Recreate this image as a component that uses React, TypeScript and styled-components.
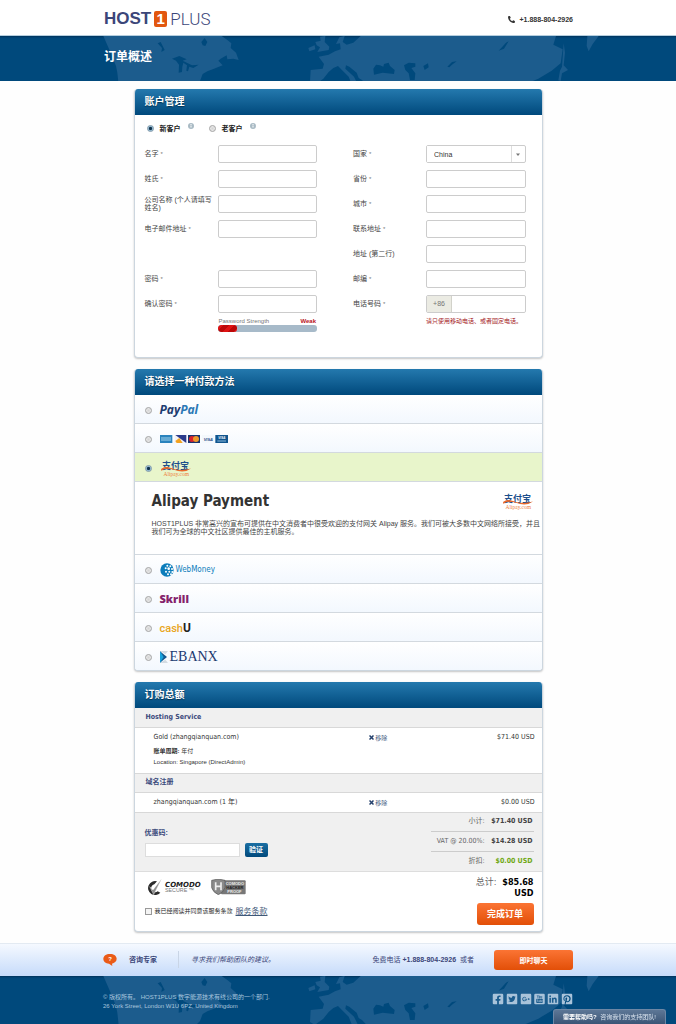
import React from "react";
import styled, { createGlobalStyle, css } from "styled-components";
import {
  FaFacebookSquare,
  FaTwitterSquare,
  FaGooglePlusSquare,
  FaLinkedin,
  FaPinterestSquare,
  FaPhoneAlt,
} from "react-icons/fa";

const sans = `"Liberation Sans", "Noto Sans CJK SC", sans-serif`;
const humanist = `"DejaVu Sans Condensed", "DejaVu Sans", "Noto Sans CJK SC", sans-serif`;

const Global = createGlobalStyle`
  * { box-sizing: border-box; }
  body { margin: 0; background: #fefefe; color: #444; font-family: ${sans}; font-size: 7px; line-height: 9px; }
  input, select, button { font-family: inherit; margin: 0; }
  h1, h2, h3, p { margin: 0; }
`;

/* ---------- page frame ---------- */

const Container = styled.div`
  position: relative;
  display: flex;
  align-items: center;
  width: 100%;
  max-width: 470px;
  margin: 0 auto;
`;

const Header = styled.header`
  display: flex;
  height: 36px;
  background: #fff;
  border-bottom: 1px solid #b5cede;
`;

const Logo = styled.a`
  display: flex;
  align-items: center;
  gap: 3px;
  margin-left: 1px;
  padding-top: 2px;
  color: #3b4679;
  font-size: 17px;
  line-height: 20px;
  text-decoration: none;
`;

const LogoOne = styled.span`
  width: 13px;
  height: 16px;
  border-radius: 2px;
  background: #e2570f;
  color: #fff;
  font-size: 15px;
  font-weight: 700;
  line-height: 16px;
  text-align: center;
`;

const LogoLight = styled.span`
  font-family: Roboto, sans-serif;
  font-weight: 300;
`;

const Phone = styled.span`
  display: flex;
  align-items: center;
  gap: 4px;
  margin-left: auto;
  margin-top: 4px;
  color: #333;
  font-weight: 700;
`;

const mapGround = css`
  position: relative;
  overflow: hidden;
  background: #00497c;
`;

const Banner = styled.div`
  ${mapGround}
  display: flex;
  height: 45px;
  box-shadow: inset 0 3px 2px -2px #00335c;
`;

const MapSvg = styled.svg`
  position: absolute;
  top: 0;
  left: 50%;
  margin-left: -248px;
`;

const PageTitle = styled.h1`
  margin-left: 1px;
  padding-bottom: 3px;
  color: #fff;
  font-size: 12px;
  line-height: 16px;
`;

const Main = styled.main`
  display: flex;
  flex-direction: column;
  gap: 11px;
  width: 100%;
  max-width: 409px;
  margin: 0 auto;
  padding: 8px 0 11px;
  position: relative;
`;

const Card = styled.section`
  border: 1px solid #ccd6df;
  border-top: 0;
  border-radius: 4px;
  background: #fff;
  box-shadow: 0 1px 2px #c4c4c4;
  overflow: hidden;
`;

const CardTitle = styled.h2`
  height: 26px;
  padding: 0 10px;
  background: linear-gradient(#2479ae, #00497c);
  color: #fff;
  font-size: 10px;
  line-height: 25px;
  text-shadow: 0 1px 1px #003050;
`;

/* ---------- form ---------- */

const Radio = styled.input.attrs({ type: "radio" })`
  appearance: none;
  flex: none;
  width: 7px;
  height: 7px;
  border: 1px solid #a3a3a3;
  border-radius: 50%;
  background: radial-gradient(#d4d4d4, #f2f2f2);
  &:checked {
    border-color: #8199a9;
    background: radial-gradient(#10324c 35%, #9cc4dd 60%);
  }
`;

const Customers = styled.div`
  display: flex;
  align-items: center;
  height: 26px;
  padding: 0 12px;
  gap: 15px;
`;

const CustomerLabel = styled.label`
  display: flex;
  align-items: center;
  gap: 6px;
  color: #222;
  font-weight: 700;
`;

const Info = styled.svg`
  margin: 0 0 5px 1px;
`;

const Fields = styled.div`
  display: grid;
  grid-template-columns: 1fr 1fr;
  column-gap: 36px;
  row-gap: 7px;
  padding: 4px 16px 25px 10px;
`;

const Field = styled.label`
  display: grid;
  grid-template-columns: 73px 1fr;
  align-items: center;
  height: 18px;
  line-height: 8px;
  sup { color: #777; font-size: 6px; line-height: 6px; vertical-align: 0; }
`;

const Box = styled.input`
  width: 100%;
  min-width: 0;
  height: 18px;
  padding: 0 4px;
  border: 1px solid #ccc;
  border-radius: 2px;
  background: #fff;
  font-size: 7px;
`;

const SelectWrap = styled.span`
  display: grid;
  grid-template-columns: 1fr 13px;
  border: 1px solid #ccc;
  border-radius: 2px;
`;

const Select = styled.select`
  appearance: none;
  min-width: 0;
  height: 16px;
  padding: 0 7px;
  border: 0;
  border-right: 1px solid #ddd;
  background: #fff;
  color: #333;
  font-size: 7px;
`;

const Caret = styled.svg`
  place-self: center;
`;

const PhoneGroup = styled.span`
  display: flex;
  border: 1px solid #ccc;
  border-radius: 2px;
  overflow: hidden;
  ${Box} { height: 16px; border: 0; }
`;

const Prefix = styled.span`
  flex: none;
  width: 25px;
  border-right: 1px solid #d2d2ca;
  background: #ebebe3;
  color: #777;
  line-height: 16px;
  text-align: center;
`;

const Below = styled.div`
  margin: -3px 0 0 73px;
  font-size: 6px;
  line-height: 8px;
  white-space: nowrap;
`;

const StrengthText = styled.div`
  display: flex;
  justify-content: space-between;
  padding: 0 1px;
  color: #777;
  b { color: #b9121b; }
`;

const Meter = styled.div`
  height: 7px;
  border-radius: 3px;
  background: #a7bac9;
  overflow: hidden;
`;

const MeterFill = styled.div`
  width: 20%;
  height: 7px;
  border-radius: 3px;
  background: repeating-linear-gradient(135deg, #df1313 0 4px, #bd0808 4px 8px);
`;

const Hint = styled.span`
  color: #a3161b;
`;

/* ---------- payment ---------- */

const Method = styled.label<{ $active?: boolean }>`
  display: flex;
  align-items: center;
  gap: 8px;
  height: 29px;
  padding: 2px 10px 0;
  border-bottom: 1px solid #d3d9df;
  background: ${(p) => (p.$active ? "#e8f5cb" : "linear-gradient(#ffffff, #f3f8fe)")};
  &:last-child { height: 28px; border-bottom: 0; }
`;

const Detail = styled.div`
  display: grid;
  height: 73px;
  grid-template-rows: 38px 1fr;
  padding: 0 0 0 17px;
  border-bottom: 1px solid #d3d9df;
`;

const DetailHead = styled.div`
  display: flex;
  align-items: center;
  justify-content: space-between;
  padding-right: 9px;
`;

const DetailTitle = styled.h3`
  color: #333;
  font-family: ${humanist};
  font-size: 15px;
  line-height: 20px;
`;

const DetailText = styled.p`
  line-height: 8px;
`;

const Word = styled.span<{ $size: number; $color: string; $family?: string; $weight?: number; $italic?: boolean }>`
  color: ${(p) => p.$color};
  font-family: ${(p) => p.$family ?? "inherit"};
  font-size: ${(p) => p.$size}px;
  font-style: ${(p) => (p.$italic ? "italic" : "normal")};
  font-weight: ${(p) => p.$weight ?? 400};
  line-height: 14px;
`;

const Brand = styled.span`
  display: flex;
  align-items: center;
  gap: 2px;
`;

/* ---------- order ---------- */

const Order = styled.table`
  width: 100%;
  border-collapse: collapse;
  table-layout: fixed;
  color: #333;
  font-family: ${humanist};
  font-size: 7px;
`;

const Col = styled.col<{ $w: number }>`
  width: ${(p) => p.$w}%;
`;

const GroupHead = styled.th`
  height: 19px;
  padding: 0 11px;
  border-bottom: 1px solid #d8d8d8;
  background: #f0f0f0;
  color: #3b4a7c;
  text-align: left;
`;

const Cell = styled.td<{ $right?: boolean; $tall?: boolean }>`
  height: ${(p) => (p.$tall ? 46 : 20)}px;
  padding: 5px 7px 4px ${(p) => (p.$right ? 0 : 19)}px;
  border-bottom: 1px solid #d8d8d8;
  text-align: ${(p) => (p.$right ? "right" : "left")};
  vertical-align: top;
  white-space: nowrap;
`;

const Extra = styled.div<{ $gap?: boolean }>`
  margin-top: ${(p) => (p.$gap ? 5 : 2)}px;
  font-family: ${sans};
  font-size: 6px;
`;

const Remove = styled.a`
  display: flex;
  align-items: center;
  gap: 1px;
  color: #4a6285;
  font-size: 6px;
  text-decoration: none;
`;

const Summary = styled.div`
  display: flex;
  justify-content: space-between;
  padding: 0 8px 0 10px;
  border-bottom: 1px solid #ddd;
  background: #f0f0f0;
`;

const Promo = styled.div`
  display: flex;
  flex-direction: column;
  gap: 6px;
  padding-top: 15px;
  color: #3b4a7c;
  font-weight: 700;
`;

const PromoRow = styled.div`
  display: flex;
  gap: 5px;
`;

const PromoInput = styled.input`
  width: 95px;
  height: 14px;
  border: 1px solid #ddd;
  background: #fff;
  font-size: 7px;
`;

const Verify = styled.button`
  width: 23px;
  height: 14px;
  padding: 0;
  border: 0;
  border-radius: 2px;
  background: linear-gradient(#1b6fa3, #00497c);
  color: #fff;
  font-size: 7px;
  font-weight: 700;
  line-height: 14px;
`;

const Totals = styled.table`
  width: 103px;
  border-collapse: collapse;
  color: #666;
  font-family: ${humanist};
  font-size: 7px;
  white-space: nowrap;
  th, td { height: 19px; padding: 0 1px 0 0; text-align: right; }
  th { font-weight: 400; }
  td { color: #444; font-weight: 700; }
  tr + tr th, tr + tr td { height: 20px; border-top: 1px solid #ccc; }
  tr:last-child th, tr:last-child td { height: 19px; }
  tr:last-child td { color: #6fa814; }
`;

const Finish = styled.div`
  display: flex;
  justify-content: space-between;
  height: 59px;
  padding: 5px 8px 0 10px;
`;

const FinishLeft = styled.div`
  display: flex;
  flex-direction: column;
  gap: 11px;
  padding-top: 1px;
`;

const FinishRight = styled.div`
  display: flex;
  flex-direction: column;
  align-items: flex-end;
  gap: 4px;
`;

const Seals = styled.div`
  display: flex;
  align-items: center;
  gap: 8px;
`;

const Terms = styled.div`
  display: flex;
  align-items: center;
  gap: 3px;
  color: #222;
  font-size: 6px;
  a { color: #3e5878; font-size: 8px; }
  label { display: flex; align-items: center; gap: 3px; }
`;

const Check = styled.input.attrs({ type: "checkbox" })`
  appearance: none;
  width: 7px;
  height: 7px;
  border: 1px solid #999;
  background: #f4f4f4;
`;

const Total = styled.div`
  display: flex;
  gap: 5px;
  color: #666;
  font-family: ${humanist};
  font-size: 9px;
  line-height: 11px;
  b { width: 32px; color: #000; text-align: right; }
`;

const Orange = styled.button<{ $w: number; $h: number; $size: number }>`
  width: ${(p) => p.$w}px;
  height: ${(p) => p.$h}px;
  padding: 0;
  border: 0;
  border-radius: 3px;
  background: linear-gradient(#fb7434, #e24f08);
  color: #fff;
  font-size: ${(p) => p.$size}px;
  font-weight: 700;
`;

/* ---------- footer ---------- */

const HelpBar = styled.aside`
  display: flex;
  height: 33px;
  border-top: 1px solid #e3eaf2;
  background: linear-gradient(#f5f9ff, #c6dbfa);
  color: #3b4679;
`;

const HelpTitle = styled.b`
  width: 49px;
  margin-left: 12px;
`;

const HelpText = styled.em`
  padding: 4px 0 4px 12px;
  border-left: 1px solid #c9d5e6;
`;

const HelpPhone = styled.span`
  margin: 0 20px 0 auto;
  b { margin: 0 2px 0 0; }
`;

const Footer = styled.footer`
  ${mapGround}
  height: 49px;
  box-shadow: inset 0 3px 2px -2px #00335c;
`;

const FooterRow = styled(Container)`
  align-items: flex-start;
  justify-content: space-between;
  padding-top: 17px;
`;

const Legal = styled.p`
  color: #a9c6de;
  font-size: 6px;
  line-height: 9px;
`;

const Social = styled.nav`
  display: flex;
  gap: 2px;
  a { display: flex; color: #a9c3da; }
`;

const HelpTab = styled.button`
  position: fixed;
  right: 10px;
  bottom: 0;
  height: 15px;
  padding: 0 9px;
  border: 1px solid #6d87a5;
  border-bottom: 0;
  border-radius: 3px 3px 0 0;
  background: linear-gradient(#5d7796, #3b5576);
  color: #dbe5f0;
  font-size: 6px;
  line-height: 14px;
  white-space: nowrap;
  b { margin-right: 2px; color: #fff; }
`;

/* ---------- drawings ---------- */

const WorldMap = () => (
  <MapSvg width="520" height="49" viewBox="0 0 1560 147" aria-hidden="true">
    <g fill="#1c5c8d">
      <path d="M40 0H395L412 12L424 22L422 36L438 50L446 72L430 68L412 70L410 58L392 68L385 74L398 88L372 98L352 106L338 114L330 135L318 147H86L82 110L78 90L62 50Z" />
      <path d="M676 18L692 14L690 2L706 0L704 18L718 32L716 42L682 48L690 34L680 28ZM655 36L674 28L676 40L658 46Z" />
      <path d="M686 62L716 56L735 46L752 40L750 22L738 24L748 4L764 0L758 18L770 26L790 20L812 0H1398L1390 26L1418 40L1412 82L1385 104L1345 128L1300 147H675L660 138L662 102L698 98L702 84Z" />
      <path d="M1421 22L1425 50L1421 88L1434 102L1416 112L1412 135L1405 133L1410 104L1416 92Z" />
      <path d="M1492 0H1526L1508 24L1496 46L1490 30Z" />
    </g>
    <g fill="#00497c">
      <path d="M203 22L212 18L224 42L214 48L216 36ZM246 68L268 60L290 70L278 74L306 88L326 86L310 96L298 92L294 106L289 104L291 88L280 80L277 92L276 108L266 110L267 86L258 74ZM334 18L344 6L352 18L346 30L338 28Z" />
      <path d="M674 147L700 128L716 108L730 96L744 90L758 104L776 122L786 147ZM768 88L778 92L800 110L806 126L816 132L830 147H804L792 122L766 98Z" />
      <path d="M942 88L956 80L976 82L976 92L964 96L976 112L974 132L960 132L956 112L946 102ZM1000 90L1014 82L1016 94L1004 102ZM1226 44L1248 20L1256 16L1242 38ZM1072 92L1086 78L1100 76L1086 86L1078 94ZM850 98L858 86L870 88L880 92L882 84L896 80L900 90L914 102L912 114L878 110L852 116Z" />
    </g>
  </MapSvg>
);

const InfoIcon = () => (
  <Info width="6" height="6" viewBox="0 0 12 12" aria-hidden="true">
    <circle cx="6" cy="6" r="6" fill="#a9bac4" />
    <path d="M6 5v4M6 2v2" stroke="#fff" strokeWidth="2" />
  </Info>
);

const AlipayLogo = () => (
  <svg width="31" height="18" viewBox="0 0 62 36" role="img" aria-label="支付宝 Alipay.com">
    <text x="4" y="20" fontSize="18" fontWeight="700" fill="#1d4f8c" fontFamily="Noto Sans CJK SC">支付宝</text>
    <path d="M2 20Q10 13 22 18Q40 25 62 19Q52 27 36 24Q18 18 10 20Q5 21 3 24Z" fill="#e9682a" />
    <text x="7" y="33" fontSize="11" fill="#ee7c3c" fontFamily="Liberation Serif">Alipay.com</text>
  </svg>
);

const CreditCards = () => (
  <svg width="68" height="8" viewBox="0 0 204 24" role="img" aria-label="Amex, Maestro, MasterCard, Visa">
    <rect width="37" height="24" fill="#2a83bd" />
    <path d="M4 9h29M4 15h29" stroke="#a5d3ea" strokeWidth="4" strokeDasharray="4 2" />
    <rect x="44" width="35" height="24" fill="#f3f1f4" />
    <path d="M46 0H79V24Z" fill="#2b3b8c" />
    <path d="M46 18L58 9L68 24H50Z" fill="#f3a21e" />
    <rect x="84" width="36" height="24" fill="#19346d" />
    <circle cx="96" cy="12" r="9" fill="#d9232b" />
    <circle cx="108" cy="12" r="9" fill="#f0992b" />
    <rect x="126" width="36" height="24" fill="#f4f8fc" />
    <text x="131" y="17" fontSize="12" fontWeight="700" fontStyle="italic" fill="#1b4a86" fontFamily="Liberation Sans">VISA</text>
    <rect x="166" width="38" height="24" fill="#11568f" />
    <text x="175" y="12" fontSize="9" fontWeight="700" fontStyle="italic" fill="#fff" fontFamily="Liberation Sans">VISA</text>
    <path d="M172 18h26" stroke="#8bb8da" strokeWidth="3" />
  </svg>
);

const WebMoneyGlobe = () => (
  <svg width="14" height="14" viewBox="0 0 42 42" aria-hidden="true">
    <circle cx="21" cy="21" r="20" fill="#0c7dbb" />
    <g fill="#fff">
      <circle cx="22" cy="8" r="3" /><circle cx="31" cy="10" r="3" /><circle cx="17" cy="16" r="3" />
      <circle cx="26" cy="17" r="4" /><circle cx="36" cy="18" r="3" /><circle cx="18" cy="26" r="3" />
      <circle cx="28" cy="26" r="3" /><circle cx="37" cy="27" r="3" /><circle cx="24" cy="34" r="3" />
      <circle cx="33" cy="34" r="3" />
    </g>
  </svg>
);

const EbanxMark = () => (
  <svg width="8" height="12" viewBox="0 0 24 36" aria-hidden="true">
    <path d="M0 0H24L16 10Z" fill="#d3dbe2" />
    <path d="M0 36H24L16 26Z" fill="#d3dbe2" />
    <path d="M0 1L21 18L0 35Z" fill="#14588f" />
    <path d="M0 1L11 18L0 35Z" fill="#19a3dc" />
  </svg>
);

const ComodoSecure = () => (
  <svg width="58" height="18" viewBox="0 0 174 54" role="img" aria-label="Comodo Secure">
    <path d="M36 10A21 21 0 1 0 46 44L38 40A12 12 0 1 1 28 19Z" fill="#2b2b2b" />
    <path d="M14 26L24 36L50 2L26 50Z" fill="#8d8d8d" stroke="#fff" strokeWidth="1" />
    <text x="60" y="26" fontSize="21" fontWeight="700" fontStyle="italic" fill="#222" fontFamily="DejaVu Sans">COMODO</text>
    <text x="60" y="42" fontSize="16" fill="#777" fontFamily="Liberation Sans">SECURE ™</text>
  </svg>
);

const HackerProof = () => (
  <svg width="35" height="16" viewBox="0 0 105 48" role="img" aria-label="Comodo Hacker Proof">
    <rect x="30" y="4" width="74" height="42" rx="3" fill="#777" />
    <path d="M2 4L22 0L42 4V26Q36 42 22 47Q6 40 2 26Z" fill="#8a8a8a" stroke="#555" strokeWidth="2" />
    <path d="M14 10V34M30 10V34M14 22H30" stroke="#eee" strokeWidth="5" />
    <text x="44" y="17" fontSize="12" fontWeight="700" fill="#eee" fontFamily="Liberation Sans">COMODO</text>
    <text x="46" y="29" fontSize="12" fontWeight="700" fill="#222" fontFamily="Liberation Sans">HACKER</text>
    <text x="49" y="42" fontSize="12" fontWeight="700" fill="#eee" fontFamily="Liberation Sans">PROOF</text>
  </svg>
);

const Bubble = () => (
  <svg width="14" height="12" viewBox="0 0 42 36" aria-hidden="true">
    <path d="M21 0C33 0 41 6 41 14.500C41 23 34 28 27 29L28 36L18 29.500C8 29 1 23 1 14.500C1 6 9 0 21 0Z" fill="#ea5b17" />
    <text x="16" y="21" fontSize="18" fontWeight="700" fill="#fff" fontFamily="Liberation Sans">?</text>
  </svg>
);

const YouTubeIcon = () => (
  <svg width="11" height="12" viewBox="0 0 448 512" aria-hidden="true">
    <rect y="32" width="448" height="448" rx="48" fill="#a9c3da" />
    <path d="M120 90L150 150V210M180 90L150 150M210 130V210H245V130ZM280 130V200Q295 220 320 205V130" fill="none" stroke="#1c5c8d" strokeWidth="26" />
    <rect x="85" y="245" width="278" height="180" rx="30" fill="#1c5c8d" />
    <path d="M110 290H170M140 290V385M190 315V380H225V315M255 285V380H285V320H255M345 350H315V320H345ZM315 350V380H345" fill="none" stroke="#a9c3da" strokeWidth="20" />
  </svg>
);

const CrossIcon = () => (
  <svg width="5" height="5" viewBox="0 0 10 10" aria-hidden="true">
    <path d="M1 1L9 9M9 1L1 9" stroke="#24406c" strokeWidth="3" />
  </svg>
);

/* ---------- page ---------- */

const TextField = ({ label, required, type = "text" }: { label: string; required?: boolean; type?: string }) => (
  <Field>
    <span>{label} {required && <sup>*</sup>}</span>
    <Box type={type} />
  </Field>
);

const RemoveLink = () => (
  <Remove href="#"><CrossIcon />移除</Remove>
);

export default function App() {
  return (
    <>
      <Global />
      <Header>
        <Container>
          <Logo href="#"><b>HOST</b><LogoOne>1</LogoOne><LogoLight>PLUS</LogoLight></Logo>
          <Phone><FaPhoneAlt size={7} />+1.888-804-2926</Phone>
        </Container>
      </Header>
      <Banner>
        <WorldMap />
        <Container><PageTitle>订单概述</PageTitle></Container>
      </Banner>

      <Main>
        <Card>
          <CardTitle>账户管理</CardTitle>
          <Customers>
            <CustomerLabel><Radio name="customer" defaultChecked />新客户<InfoIcon /></CustomerLabel>
            <CustomerLabel><Radio name="customer" />老客户<InfoIcon /></CustomerLabel>
          </Customers>
          <Fields>
            <TextField label="名字" required />
            <Field>
              <span>国家 <sup>*</sup></span>
              <SelectWrap>
                <Select defaultValue="China"><option>China</option></Select>
                <Caret width="4" height="3" viewBox="0 0 8 6" aria-hidden="true"><path d="M0 1H8L4 6Z" fill="#777" /></Caret>
              </SelectWrap>
            </Field>
            <TextField label="姓氏" required />
            <TextField label="省份" required />
            <TextField label="公司名称 (个人请填写姓名)" />
            <TextField label="城市" required />
            <TextField label="电子邮件地址" required type="email" />
            <TextField label="联系地址" required />
            <span />
            <TextField label="地址 (第二行)" />
            <TextField label="密码" required type="password" />
            <TextField label="邮编" required />
            <TextField label="确认密码" required type="password" />
            <Field>
              <span>电话号码 <sup>*</sup></span>
              <PhoneGroup><Prefix>+86</Prefix><Box type="tel" /></PhoneGroup>
            </Field>
            <Below>
              <StrengthText>Password Strength <b>Weak</b></StrengthText>
              <Meter><MeterFill /></Meter>
            </Below>
            <Below><Hint>请只使用移动电话、或者固定电话。</Hint></Below>
          </Fields>
        </Card>

        <Card>
          <CardTitle>请选择一种付款方法</CardTitle>
          <Method>
            <Radio name="method" aria-label="PayPal" />
            <span>
              <Word $size={12} $weight={700} $italic $color="#1d3c70" $family="Noto Sans">Pay</Word>
              <Word $size={12} $weight={700} $italic $color="#2c78b5" $family="Noto Sans">Pal</Word>
            </span>
          </Method>
          <Method><Radio name="method" /><CreditCards /></Method>
          <Method $active><Radio name="method" defaultChecked /><AlipayLogo /></Method>
          <Detail>
            <DetailHead><DetailTitle>Alipay Payment</DetailTitle><AlipayLogo /></DetailHead>
            <DetailText>HOST1PLUS 非常高兴的宣布可提供在中文消费者中很受欢迎的支付网关 Alipay 服务。我们可被大多数中文网络所接受，并且我们可为全球的中文社区提供最佳的主机服务。</DetailText>
          </Detail>
          <Method>
            <Radio name="method" />
            <Brand><WebMoneyGlobe /><Word $size={8} $color="#0c7dbb" $family="DejaVu Sans Condensed">WebMoney</Word></Brand>
          </Method>
          <Method>
            <Radio name="method" />
            <Word $size={11} $weight={800} $color="#85226b" $family="Open Sans">Skrill</Word>
          </Method>
          <Method>
            <Radio name="method" />
            <span>
              <Word $size={11} $color="#e9a521" $family="Roboto" $weight={500}>cash</Word>
              <Word $size={12} $color="#222" $family="Roboto" $weight={700}>U</Word>
            </span>
          </Method>
          <Method>
            <Radio name="method" />
            <Brand><EbanxMark /><Word $size={14} $color="#1c3a70" $family="Liberation Serif">EBANX</Word></Brand>
          </Method>
        </Card>

        <Card>
          <CardTitle>订购总额</CardTitle>
          <Order>
            <colgroup><Col $w={53} /><Col $w={22} /><Col $w={25} /></colgroup>
            <tbody>
              <tr><GroupHead colSpan={3}>Hosting Service</GroupHead></tr>
              <tr>
                <Cell $tall>
                  Gold (zhangqianquan.com)
                  <Extra $gap><b>账单周期:</b> 年付</Extra>
                  <Extra>Location: Singapore (DirectAdmin)</Extra>
                </Cell>
                <Cell><RemoveLink /></Cell>
                <Cell $right>$71.40 USD</Cell>
              </tr>
              <tr><GroupHead colSpan={3}>域名注册</GroupHead></tr>
              <tr>
                <Cell>zhangqianquan.com (1 年)</Cell>
                <Cell><RemoveLink /></Cell>
                <Cell $right>$0.00 USD</Cell>
              </tr>
            </tbody>
          </Order>
          <Summary>
            <Promo>
              <label htmlFor="promo">优惠码:</label>
              <PromoRow><PromoInput id="promo" type="text" /><Verify type="button">验证</Verify></PromoRow>
            </Promo>
            <Totals>
              <tbody>
                <tr><th scope="row">小计:</th><td>$71.40 USD</td></tr>
                <tr><th scope="row">VAT @ 20.00%:</th><td>$14.28 USD</td></tr>
                <tr><th scope="row">折扣:</th><td>$0.00 USD</td></tr>
              </tbody>
            </Totals>
          </Summary>
          <Finish>
            <FinishLeft>
              <Seals><ComodoSecure /><HackerProof /></Seals>
              <Terms><label><Check />我已经阅读并同意该服务条款</label><a href="#">服务条款</a></Terms>
            </FinishLeft>
            <FinishRight>
              <Total>总计: <b>$85.68 USD</b></Total>
              <Orange $w={57} $h={22} $size={9}>完成订单</Orange>
            </FinishRight>
          </Finish>
        </Card>
      </Main>

      <HelpBar>
        <Container>
          <Bubble />
          <HelpTitle>咨询专家</HelpTitle>
          <HelpText>寻求我们帮助团队的建议。</HelpText>
          <HelpPhone>免费电话 <b>+1.888-804-2926</b> 或者</HelpPhone>
          <Orange $w={79} $h={20} $size={7}>即时聊天</Orange>
        </Container>
      </HelpBar>
      <Footer>
        <WorldMap />
        <FooterRow>
          <Legal>© 版权所有。 HOST1PLUS 数字能源技术有线公司的一个部门.<br />26 York Street, London W1U 6PZ, United Kingdom</Legal>
          <Social>
            <a href="#" aria-label="Facebook"><FaFacebookSquare size={12} /></a>
            <a href="#" aria-label="Twitter"><FaTwitterSquare size={12} /></a>
            <a href="#" aria-label="Google Plus"><FaGooglePlusSquare size={12} /></a>
            <a href="#" aria-label="YouTube"><YouTubeIcon /></a>
            <a href="#" aria-label="LinkedIn"><FaLinkedin size={12} /></a>
            <a href="#" aria-label="Pinterest"><FaPinterestSquare size={12} /></a>
          </Social>
        </FooterRow>
      </Footer>
      <HelpTab><b>需要帮助吗?</b> 咨询我们的支持团队!</HelpTab>
    </>
  );
}
